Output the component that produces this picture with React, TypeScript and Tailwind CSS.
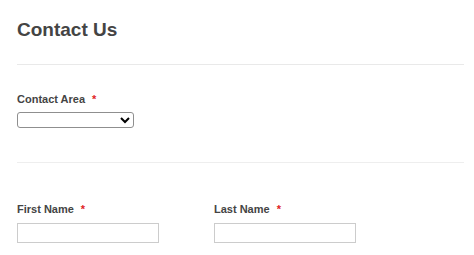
import React from "react";

export default function App() {
  const font = { fontFamily: '"Liberation Sans", Arial, sans-serif' };
  return (
    <div className="w-[474px] h-[255px] bg-white overflow-hidden" style={font}>
      <div className="pl-[17px] w-[464px]">
        <h1 className="pt-[18px] text-[19px] leading-[24px] font-bold text-[#444444]">Contact Us</h1>
        <div className="mt-[22px] h-px bg-[#e9e9e9]" />
        <div className="mt-[27px]">
          <label className="block text-[11px] leading-[14px] font-bold text-[#444444]">
            Contact Area<span className="ml-[7px] text-[#e02424]">*</span>
          </label>
          <select className="mt-[6px] block w-[117px] h-[16px] border border-[#8f8f8f] rounded-[3px] bg-white text-[11px] text-black">
            <option></option>
          </select>
        </div>
        <div className="mt-[34px] h-px bg-[#eeeeee]" />
        <div className="mt-[39px] flex gap-[55px]">
          <div>
            <label className="block text-[11px] leading-[14px] font-bold text-[#444444]">
              First Name<span className="ml-[7px] text-[#e02424]">*</span>
            </label>
            <input className="mt-[7px] block w-[142px] h-[20px] border border-[#cccccc] bg-white" />
          </div>
          <div>
            <label className="block text-[11px] leading-[14px] font-bold text-[#444444]">
              Last Name<span className="ml-[7px] text-[#e02424]">*</span>
            </label>
            <input className="mt-[7px] block w-[142px] h-[20px] border border-[#cccccc] bg-white" />
          </div>
        </div>
      </div>
    </div>
  );
}
